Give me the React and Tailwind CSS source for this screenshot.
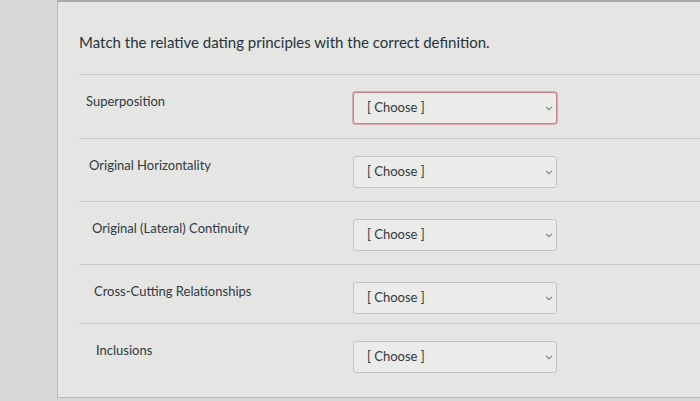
import React from "react";

const rows = [
  { label: "Superposition", h: "h-[64px]", active: true, pad: "pl-[7px]" },
  { label: "Original Horizontality", h: "h-[63px]", pad: "pl-[10px]" },
  { label: "Original (Lateral) Continuity", h: "h-[63px]", pad: "pl-[13px]" },
  { label: "Cross-Cutting Relationships", h: "h-[59px]", pad: "pl-[15px]" },
  { label: "Inclusions", h: "h-[76px]", pad: "pl-[17px]", last: true },
];

function Chevron() {
  return (
    <svg width="8" height="5" viewBox="0 0 9 6" className="text-[#7a8085]">
      <path d="M1 1l3.5 3.5L8 1" fill="none" stroke="currentColor" strokeWidth="1.3" />
    </svg>
  );
}

function Select({ active }) {
  return (
    <div
      className={`flex items-center justify-between w-[204px] h-[32px] rounded-[3px] pl-[13px] pr-[3px] bg-[#ebebe9] border ${
        active ? "border-[#c4858b] shadow-[0_0_0_1px_#d9a9ad]" : "border-[#c2c3c2]"
      }`}
    >
      <span className="text-[13px] text-[#2f3a42]">[ Choose ]</span>
      <Chevron />
    </div>
  );
}

export default function App() {
  return (
    <div
      className="w-[700px] h-[401px] bg-[#d7d7d5] overflow-hidden"
      style={{ fontFamily: "Lato, 'Open Sans', sans-serif" }}
    >
      <div className="ml-[57px] h-[398px] bg-[#e5e5e3] border-l border-t-2 border-b border-[#b9b9b8] border-t-[#a9a9a8] pl-[21px]">
        <div className="h-[72px] pt-[29px] text-[15px] text-[#27333b]">
          Match the relative dating principles with the correct definition.
        </div>
        {rows.map((r) => (
          <div key={r.label} className={`${r.h} border-t border-[#c8c8c6] flex items-start`}>
            <div className={`w-[274px] ${r.pad} pt-[17px] text-[13px] text-[#2f3a42]`}>{r.label}</div>
            <div className="pt-[17px]">
              <Select active={r.active} />
            </div>
          </div>
        ))}
      </div>
    </div>
  );
}
